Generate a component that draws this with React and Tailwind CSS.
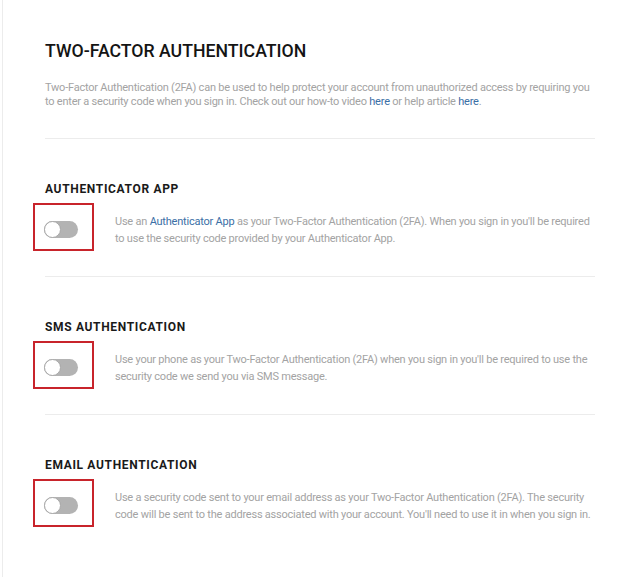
import React from 'react'

const sections = [
  {
    title: 'AUTHENTICATOR APP',
    lines: [
      <>Use an <a className="text-[#3b6fa6]">Authenticator App</a> as your Two-Factor Authentication (2FA). When you sign in you'll be required</>,
      <>to use the security code provided by your Authenticator App.</>,
    ],
  },
  {
    title: 'SMS AUTHENTICATION',
    lines: [
      <>Use your phone as your Two-Factor Authentication (2FA) when you sign in you'll be required to use the</>,
      <>security code we send you via SMS message.</>,
    ],
  },
  {
    title: 'EMAIL AUTHENTICATION',
    lines: [
      <>Use a security code sent to your email address as your Two-Factor Authentication (2FA). The security</>,
      <>code will be sent to the address associated with your account. You'll need to use it in when you sign in.</>,
    ],
  },
]

function Toggle() {
  return (
    <div className="w-[34px] h-[17px] rounded-full bg-[#b3b3b3] flex items-center">
      <div className="w-[17px] h-[17px] rounded-full bg-white border border-[#a8a8a8]" />
    </div>
  )
}

function Section({ title, lines, last }) {
  return (
    <div className={`pt-[42px] ${last ? 'pb-[40px]' : 'pb-[25px] border-b border-[#ececec]'}`}>
      <h3 className="text-[12px] leading-[16px] font-bold tracking-[0.055em] text-[#1a1a1a]">{title}</h3>
      <div className="flex items-start mt-[6px]">
        <div className="-ml-[12px] w-[61px] h-[48px] shrink-0 border-2 border-[#c8242b] pl-[9px] pt-[16px]">
          <Toggle />
        </div>
        <p className="ml-[21px] mt-[10px] text-[11px] leading-[17px] text-[#a3a3a3] tracking-[-0.02em] whitespace-nowrap">
          {lines[0]}<br />{lines[1]}
        </p>
      </div>
    </div>
  )
}

export default function App() {
  return (
    <div className="min-h-[577px] bg-white border-l border-[#ececec] ml-[2px] pl-[42px] pr-[45px] pt-[40px]" style={{ fontFamily: 'Roboto, "Liberation Sans", sans-serif' }}>
      <h1 className="text-[17.7px] leading-[22px] font-medium text-[#141414]">TWO-FACTOR AUTHENTICATION</h1>
      <div className="pt-[19px] pb-[29px] border-b border-[#ececec]">
        <p className="text-[11px] leading-[14px] text-[#a3a3a3] tracking-[-0.02em] whitespace-nowrap">
          Two-Factor Authentication (2FA) can be used to help protect your account from unauthorized access by requiring you<br />
          to enter a security code when you sign in. Check out our how-to video <a className="text-[#3b6fa6]">here</a> or help article <a className="text-[#3b6fa6]">here</a>.
        </p>
      </div>
      {sections.map((s, i) => (
        <Section key={s.title} {...s} last={i === sections.length - 1} />
      ))}
    </div>
  )
}
